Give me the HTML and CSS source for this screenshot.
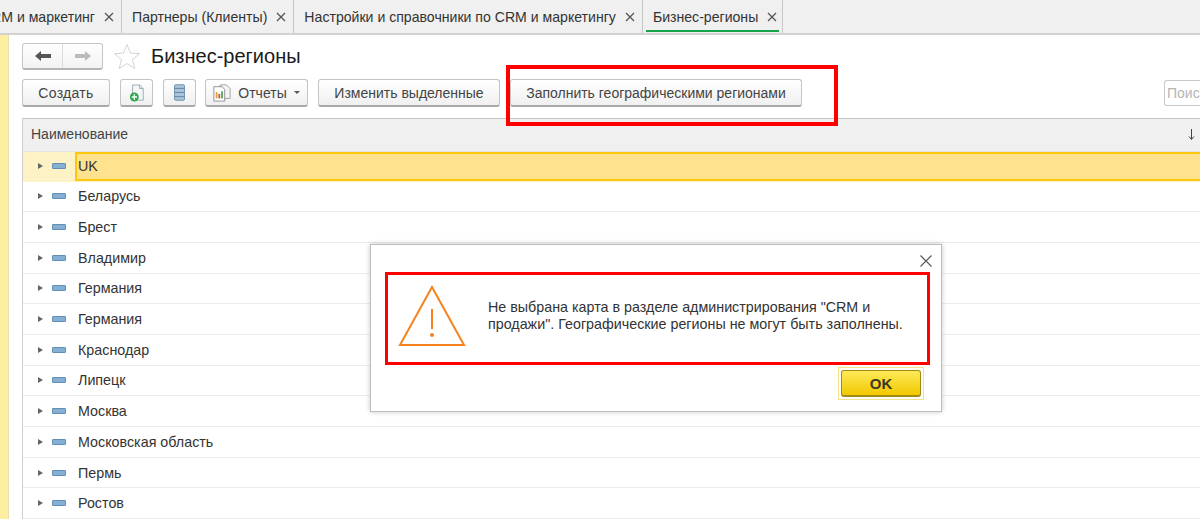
FILE: index.html
```html
<!DOCTYPE html>
<html lang="ru">
<head>
<meta charset="utf-8">
<title>Бизнес-регионы</title>
<link rel="stylesheet" href="styles.css">
</head>
<body>
<nav class="tabs">
  <div class="tab tab-first"><span>CRM и маркетинг</span><svg class="x" viewBox="0 0 10 10"><path d="M1 1l8 8M9 1l-8 8"/></svg></div>
  <div class="tab"><span>Партнеры (Клиенты)</span><svg class="x" viewBox="0 0 10 10"><path d="M1 1l8 8M9 1l-8 8"/></svg></div>
  <div class="tab"><span>Настройки и справочники по CRM и маркетингу</span><svg class="x" viewBox="0 0 10 10"><path d="M1 1l8 8M9 1l-8 8"/></svg></div>
  <div class="tab tab-active"><span>Бизнес-регионы</span><svg class="x" viewBox="0 0 10 10"><path d="M1 1l8 8M9 1l-8 8"/></svg></div>
</nav>
<div class="shell">
  <aside class="band"></aside>
  <main class="main">
    <header class="head">
      <div class="nav">
        <button class="nav-b"><svg viewBox="0 0 16 12" class="arrow"><path d="M0 6l6-5v3h10v4H6v3z" fill="#555"/></svg></button>
        <button class="nav-b"><svg viewBox="0 0 16 12" class="arrow"><path d="M16 6l-6-5v3H0v4h10v3z" fill="#bbb"/></svg></button>
      </div>
      <svg class="star" viewBox="0 0 28 27"><path d="M14 1.500l3.400 8.600 9.100.6-7 5.900 2.300 9-7.800-5-7.800 5 2.300-9-7-5.900 9.100-.6z" fill="#fff" stroke="#d4d4d4"/></svg>
      <h1 class="title">Бизнес-регионы</h1>
    </header>
    <div class="bar">
      <button class="btn b-create">Создать</button>
      <button class="btn b-icon">
        <svg viewBox="0 0 18 20" class="ico"><path d="M4 1h8l4 4v13H4z" fill="#f4f6f8" stroke="#9aa5ae"/><path d="M12 1v4h4" fill="#dde3e8" stroke="#9aa5ae"/><circle cx="6" cy="14.500" r="5" fill="#2fa84f"/><path d="M6 11.500v6M3 14.500h6" stroke="#fff" stroke-width="1.500"/></svg>
      </button>
      <button class="btn b-icon">
        <svg viewBox="0 0 12 18" class="ico-list"><rect x=".5" y=".5" width="11" height="17" rx="1.500" fill="#a9c4da" stroke="#6f8ea8"/><path d="M.5 4.500h11M.5 9h11M.5 13.500h11" stroke="#5f7f9a"/></svg>
      </button>
      <button class="btn b-rep">
        <svg viewBox="0 0 20 20" class="ico-rep"><path d="M8 1h7l4 4v11H8z" fill="#f4f4f4" stroke="#9a9a9a"/><path d="M1 3h9l3 3v13H1z" fill="#fff" stroke="#8a8a8a"/><path d="M4 9v7" stroke="#d9a441" stroke-width="2"/><path d="M7 11v5" stroke="#d8503c" stroke-width="2"/><path d="M10 8v8" stroke="#4fa85a" stroke-width="2"/></svg>
        <span>Отчеты</span><i class="caret"></i>
      </button>
      <button class="btn b-edit">Изменить выделенные</button>
      <button class="btn b-fill">Заполнить географическими регионами</button>
      <div class="search">Поиск</div>
    </div>
    <section class="table">
      <div class="thead"><span>Наименование</span><svg class="sort" viewBox="0 0 7 11"><path d="M3.500 0v10M1 7.500l2.500 3 2.500-3" fill="none" stroke="#444"/></svg></div>
      <div class="row row-sel"><i class="tri"></i><i class="dash"></i><span class="cell">UK</span></div>
      <div class="row"><i class="tri"></i><i class="dash"></i><span class="cell">Беларусь</span></div>
      <div class="row"><i class="tri"></i><i class="dash"></i><span class="cell">Брест</span></div>
      <div class="row"><i class="tri"></i><i class="dash"></i><span class="cell">Владимир</span></div>
      <div class="row"><i class="tri"></i><i class="dash"></i><span class="cell">Германия</span></div>
      <div class="row"><i class="tri"></i><i class="dash"></i><span class="cell">Германия</span></div>
      <div class="row"><i class="tri"></i><i class="dash"></i><span class="cell">Краснодар</span></div>
      <div class="row"><i class="tri"></i><i class="dash"></i><span class="cell">Липецк</span></div>
      <div class="row"><i class="tri"></i><i class="dash"></i><span class="cell">Москва</span></div>
      <div class="row"><i class="tri"></i><i class="dash"></i><span class="cell">Московская область</span></div>
      <div class="row"><i class="tri"></i><i class="dash"></i><span class="cell">Пермь</span></div>
      <div class="row"><i class="tri"></i><i class="dash"></i><span class="cell">Ростов</span></div>
    </section>
  </main>
</div>

<div class="dialog">
  <svg class="dlg-x" viewBox="0 0 12 12"><path d="M.5.500l11 11M11.500.500l-11 11"/></svg>
  <div class="dlg-body">
    <svg class="warn" viewBox="0 0 68 62"><path d="M34 2L2 60h64z" fill="none" stroke="#f5821f" stroke-width="2"/><path d="M34 24v20" stroke="#f5821f" stroke-width="2"/><circle cx="34" cy="50" r="2" fill="#f5821f"/></svg>
    <p class="msg">Не выбрана карта в разделе администрирования "CRM и продажи". Географические регионы не могут быть заполнены.</p>
  </div>
  <div class="dlg-foot"><div class="ok-wrap"><button class="ok">OK</button></div></div>
</div>

<div class="mark mark-top"></div>
<div class="mark mark-dlg"></div>
</body>
</html>
```
FILE: styles.css
```css
* { box-sizing: border-box; }
html, body { margin: 0; height: 519px; overflow: hidden; }
body { font-family: "Liberation Sans", Arial, sans-serif; font-size: 14px; color: #333; background: #fff; }
button { font: inherit; color: inherit; }

.tabs { display: flex; height: 35px; background: #f0f0f0; border-bottom: 2px solid #d2d2d2; overflow: hidden; }
.tab { display: flex; align-items: center; gap: 9px; height: 33px; padding: 0 7px 0 10px; border-right: 1px solid #c8c8c8; white-space: nowrap; flex: none; font-size: 14.100px; }
.tab-first { margin-left: -27px; width: 149px; justify-content: flex-end; }
.tab-active { width: 140px; position: relative; }
.tab-active::after { content: ""; position: absolute; left: 3px; right: 3px; bottom: 1px; height: 2px; background: #16a34a; }
.x { width: 10px; height: 10px; flex: none; }
.x path { stroke: #555; stroke-width: 1.300; fill: none; }

.shell { display: flex; height: 484px; }
.band { width: 9px; flex: none; background: #fdeea2; border-right: 1px solid #e7e0b0; }
.main { flex: 1; min-width: 0; padding-left: 13px; }

.head { display: flex; align-items: flex-start; height: 44px; padding-top: 8px; }
.nav { display: flex; width: 81px; height: 27px; border: 1px solid #c6c6c6; border-bottom: 2px solid #b5b5b5; border-radius: 3px; background: linear-gradient(#fff, #f3f3f3); }
.nav-b { flex: 1; border: 0; background: none; padding: 0; display: flex; align-items: center; justify-content: center; }
.nav-b + .nav-b { border-left: 1px solid #dcdcdc; }
.arrow { width: 16px; height: 12px; }
.star { width: 28px; height: 27px; margin-left: 10px; }
.title { margin: 0 0 0 10px; font-size: 20px; font-weight: 400; color: #1a1a1a; line-height: 27px; }

.bar { display: flex; gap: 10px; align-items: flex-start; height: 39px; }
.btn { height: 28px; border: 1px solid #c4c4c4; border-bottom: 2px solid #a8a8a8; border-radius: 3px; background: linear-gradient(#fff, #f0f0f0); padding: 0; display: flex; align-items: center; justify-content: center; color: #444; flex: none; white-space: nowrap; }
.b-create { width: 88px; letter-spacing: .3px; }
.b-icon { width: 33px; }
.b-rep { width: 103px; gap: 7px; margin-left: -1px; }
.b-edit { width: 182px; }
.b-fill { width: 292px; }
.ico { width: 16px; height: 18px; }
.ico-list { width: 11px; height: 17px; }
.ico-rep { width: 18px; height: 18px; }
.caret { width: 0; height: 0; border: 3px solid transparent; border-top: 3px solid #555; border-bottom: 0; }
.search { margin-left: auto; width: 36px; height: 26px; margin-top: 1px; border: 1px solid #c9c9c9; border-right: 0; border-radius: 3px 0 0 3px; padding: 4px 0 0 2px; color: #b5b5b5; overflow: hidden; white-space: nowrap; }

.table { border-left: 1px solid #cfcfcf; border-top: 1px solid #c4c4c4; }
.thead { display: flex; justify-content: space-between; align-items: center; height: 33px; padding: 0 5px 2px 8px; background: #f0f0f0; border-bottom: 1px solid #e4e4e4; color: #444; }
.sort { width: 7px; height: 11px; }
.row { display: flex; align-items: center; height: 30.700px; border-bottom: 1px solid #ececec; font-size: 14.300px; }
.tri { width: 0; height: 0; margin-left: 15px; border: 3.500px solid transparent; border-left: 5px solid #666; border-right: 0; flex: none; }
.dash { width: 14px; height: 6px; margin-left: 9px; flex: none; background: #85b0d4; border: 1px solid #5f8fb5; border-radius: 1px; }
.cell { margin-left: 12px; flex: 1; color: #333; }
.row-sel { height: 29.500px; background: #fdf2c5; border-bottom: 0; padding-bottom: 1px; }
.row-sel .cell { margin-left: 9px; align-self: stretch; display: flex; align-items: center; padding-left: 1px; background: #fee28e; border: 2px solid #fcc70f; border-right: 0; }

.dialog { position: absolute; left: 370px; top: 244px; width: 572px; height: 168px; background: #fff; border: 1px solid #bdbdbd; box-shadow: 0 0 5px rgba(0,0,0,.22); }
.dlg-x { position: absolute; left: 549px; top: 10px; width: 12px; height: 12px; }
.dlg-x path { stroke: #555; stroke-width: 1.100; fill: none; }
.dlg-body { display: flex; align-items: flex-start; padding: 40px 0 0 27px; height: 122px; }
.warn { width: 68px; height: 62px; flex: none; }
.msg { margin: 14px 0 0 22px; width: 425px; font-size: 14.300px; line-height: 17px; color: #333; }
.dlg-foot { display: flex; justify-content: flex-end; padding-right: 17px; }
.ok-wrap { padding: 2px; border: 1px solid #f5e08a; }
.ok { display: block; width: 80px; height: 27px; border: 1px solid #a58a10; border-bottom-width: 2px; border-radius: 3px; background: linear-gradient(#fdea5a, #f2c800); font-weight: 700; font-size: 15px; color: #3d3a20; padding: 0; }

.mark { position: absolute; border: 4px solid #f00; pointer-events: none; }
.mark-top { left: 506px; top: 65px; width: 332px; height: 61px; }
.mark-dlg { left: 385px; top: 272px; width: 545px; height: 93px; border-width: 3px; }
```
